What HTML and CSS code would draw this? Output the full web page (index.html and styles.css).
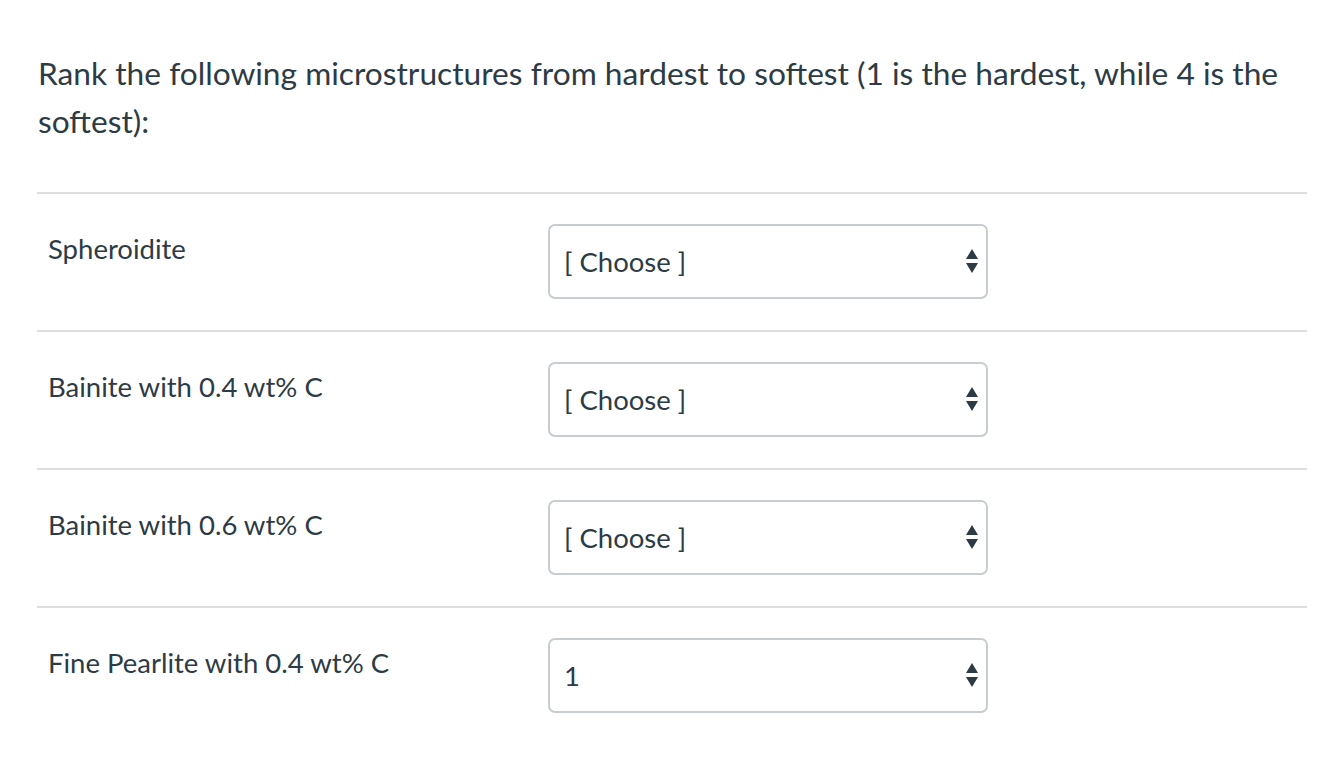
FILE: index.html
```html
<!DOCTYPE html>
<html lang="en">
<head>
<meta charset="utf-8">
<title>Question</title>
<link rel="stylesheet" href="styles.css">
</head>
<body>
<div class="question">
  <p class="prompt">Rank the following microstructures from hardest to softest (1 is the hardest, while 4 is the softest):</p>
  <div class="matches">
    <div class="match-row">
      <div class="match-label">Spheroidite</div>
      <div class="select-wrap">
        <select class="choice"><option>[ Choose ]</option></select>
        <svg class="arrows" width="12" height="24" viewBox="0 0 12 24"><path d="M6 0 L12 10 L0 10 Z M0 14 L12 14 L6 24 Z" fill="#2d3b45"/></svg>
      </div>
    </div>
    <div class="match-row">
      <div class="match-label">Bainite with 0.4 wt% C</div>
      <div class="select-wrap">
        <select class="choice"><option>[ Choose ]</option></select>
        <svg class="arrows" width="12" height="24" viewBox="0 0 12 24"><path d="M6 0 L12 10 L0 10 Z M0 14 L12 14 L6 24 Z" fill="#2d3b45"/></svg>
      </div>
    </div>
    <div class="match-row">
      <div class="match-label">Bainite with 0.6 wt% C</div>
      <div class="select-wrap">
        <select class="choice"><option>[ Choose ]</option></select>
        <svg class="arrows" width="12" height="24" viewBox="0 0 12 24"><path d="M6 0 L12 10 L0 10 Z M0 14 L12 14 L6 24 Z" fill="#2d3b45"/></svg>
      </div>
    </div>
    <div class="match-row">
      <div class="match-label">Fine Pearlite with 0.4 wt% C</div>
      <div class="select-wrap">
        <select class="choice"><option>1</option></select>
        <svg class="arrows" width="12" height="24" viewBox="0 0 12 24"><path d="M6 0 L12 10 L0 10 Z M0 14 L12 14 L6 24 Z" fill="#2d3b45"/></svg>
      </div>
    </div>
  </div>
</div>
</body>
</html>
```

FILE: styles.css
```css
html, body {
  margin: 0;
  padding: 0;
  background: #ffffff;
}
body {
  font-family: Lato, "Open Sans", sans-serif;
  color: #2d3b45;
}
.question {
  padding: 49px 33px 0 37px;
}
.prompt {
  margin: 0 0 47px 1px;
  font-size: 31.7px;
  line-height: 48px;
}
.match-row {
  display: flex;
  align-items: flex-start;
  border-top: 2px solid #dddddd;
  padding: 30px 0 31px 0;
}
.match-label {
  width: 511px;
  box-sizing: border-box;
  padding: 6px 0 0 11px;
  font-size: 27.5px;
  line-height: 38px;
}
.select-wrap {
  position: relative;
  width: 440px;
}
.choice {
  -webkit-appearance: none;
  appearance: none;
  display: block;
  width: 440px;
  height: 75px;
  box-sizing: border-box;
  border: 2px solid #c7cdd1;
  border-radius: 7px;
  background: #ffffff;
  color: #2d3b45;
  font-family: Lato, "Open Sans", sans-serif;
  font-size: 27.5px;
  padding: 0 40px 0 14px;
  margin: 0;
  outline: none;
}
.arrows {
  position: absolute;
  right: 10px;
  top: 25px;
  pointer-events: none;
}
```
